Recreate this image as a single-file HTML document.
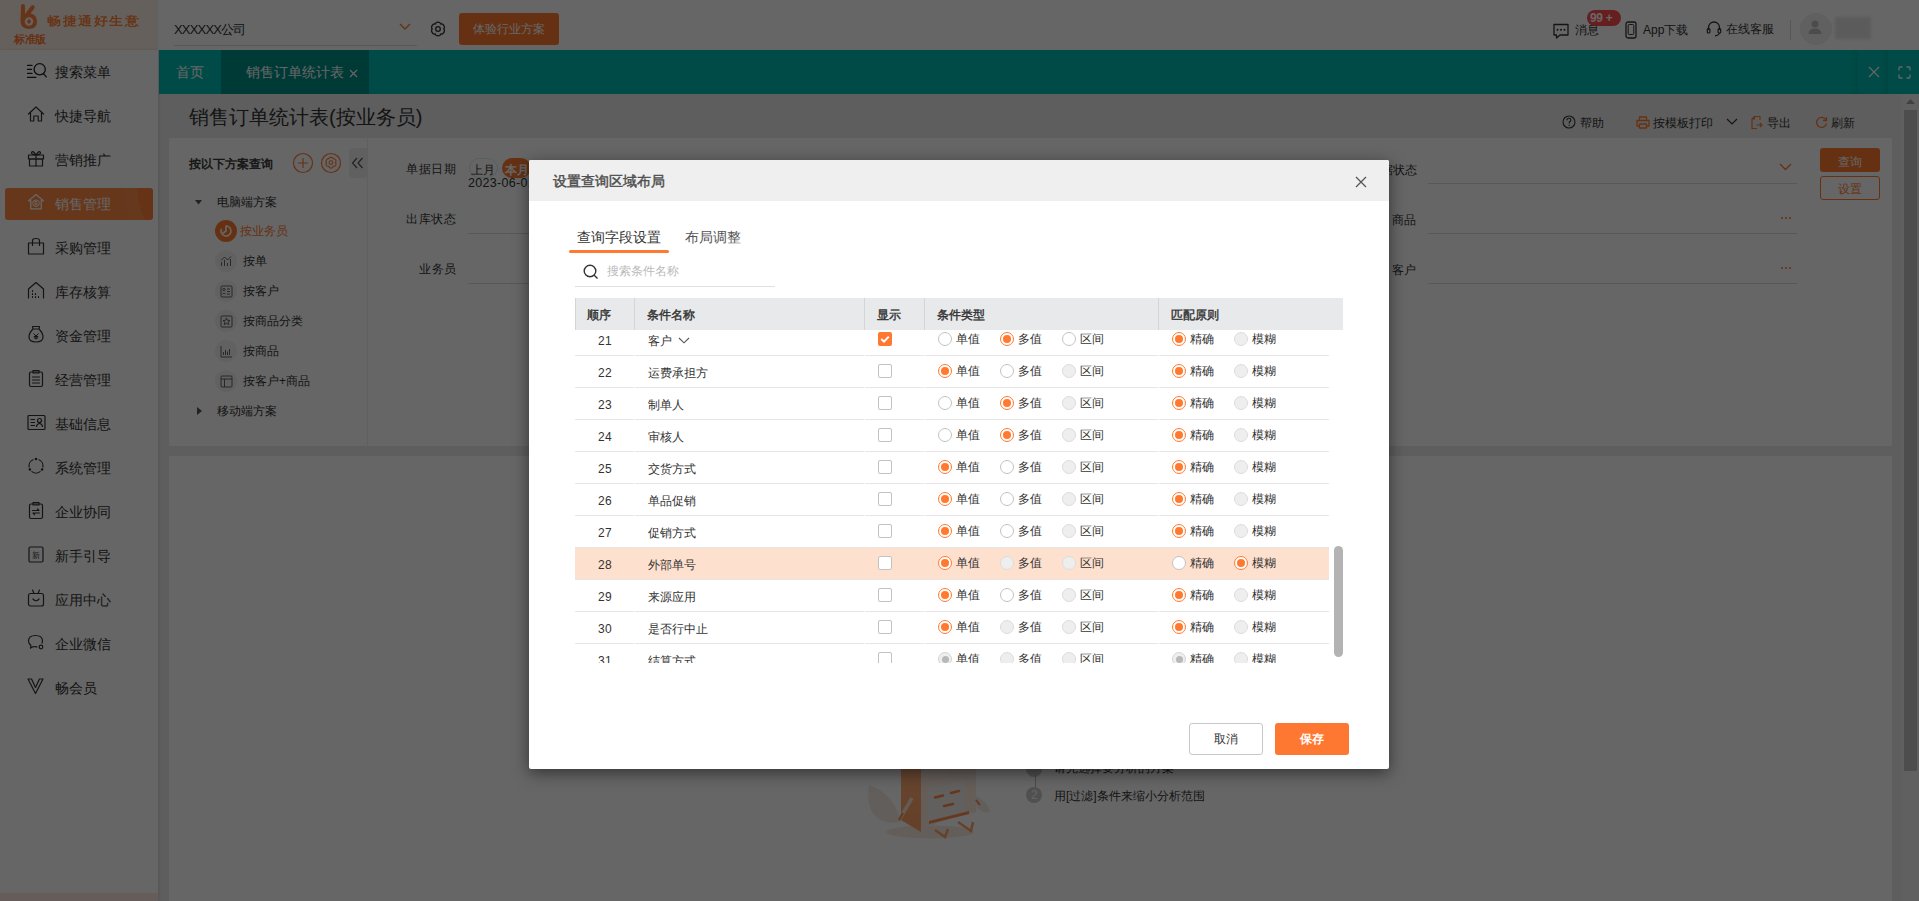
<!DOCTYPE html>
<html><head><meta charset="utf-8"><title>设置查询区域布局</title>
<style>
*{box-sizing:border-box;margin:0;padding:0}
html,body{width:1919px;height:901px;overflow:hidden;background:#ebebeb;font-family:"Liberation Sans",sans-serif;color:#333;font-size:12px}
.a{position:absolute}
.t{position:absolute;white-space:nowrap;line-height:1}
svg{position:absolute;overflow:visible}
.mask{left:0;top:0;width:1919px;height:901px;background:rgba(0,0,0,.6)}

.rd{position:absolute;width:14px;height:14px;border:1px solid #c3c3c3;border-radius:50%;background:#fff}
.rd.on{border-color:#ff7a30}
.rd.on::after{content:"";position:absolute;left:2px;top:2px;width:8px;height:8px;border-radius:50%;background:#ff7a30}
.rd.dis{background:#eeeeee;border-color:#dddddd}
.rd.dison{background:#eeeeee;border-color:#d5d5d5}
.rd.dison::after{content:"";position:absolute;left:2.5px;top:2.5px;width:7px;height:7px;border-radius:50%;background:#b8b8b8}
.cb{position:absolute;width:14px;height:14px;border:1px solid #c3c3c3;border-radius:2px;background:#fff}
.cell{position:absolute;height:1px;background:#e5e5e5}
</style></head><body>
<div class="a" style="left:0px;top:0px;width:1919px;height:50px;background:#fff;"></div><div class="a" style="left:0px;top:0px;width:158px;height:50px;background:#fff0e6;"></div><svg style="left:18px;top:3px" width="22" height="28" viewBox="0 0 22 28">
<path d="M3 3 Q3 1 5 1 Q7 1 7 3 L7 11 L13 3 Q14.5 1.5 16 2.5 Q17.5 4 16 6 L12.5 10.5 Q19 11.5 19 18.5 Q19 26 11 26 Q3 26 2.5 18.5 Z" fill="#ff8540"/>
<circle cx="11" cy="18.5" r="4.2" fill="#fff2ea"/><path d="M11 15.8 L13.2 18.5 L11 21.2 L8.8 18.5Z" fill="#ff8540"/></svg><div class="t" style="left:47px;top:15px;font-size:14px;color:#ff8540;font-weight:bold;letter-spacing:1.5px;transform:scaleY(0.86);transform-origin:0 0">畅捷通好生意</div><div class="t" style="left:14px;top:34px;font-size:11px;color:#ff7a30;font-weight:bold;letter-spacing:-0.5px">标准版</div><div class="t" style="left:174px;top:23px;font-size:13px;color:#333;font-weight:normal;letter-spacing:-0.8px">XXXXXX公司</div><div class="a" style="left:174px;top:45px;width:243px;height:1px;background:#d9d9d9;"></div><svg style="left:399px;top:23px" width="12" height="8"><path d="M1 1 L6 6 L11 1" fill="none" stroke="#ff7a30" stroke-width="1.3"/></svg><svg style="left:429px;top:20px" width="18" height="18" viewBox="0 0 18 18"><path d="M11.80 4.15 C14.03 2.79 16.89 7.75 14.60 9.00 C16.89 10.25 14.03 15.21 11.80 13.85 C11.86 16.46 6.14 16.46 6.20 13.85 C3.97 15.21 1.11 10.25 3.40 9.00 C1.11 7.75 3.97 2.79 6.20 4.15 C6.14 1.54 11.86 1.54 11.80 4.15 Z" fill="none" stroke="#333" stroke-width="1.3" stroke-linejoin="round"/><circle cx="9" cy="9" r="2.3" fill="none" stroke="#333" stroke-width="1.3"/></svg><div class="a" style="left:459px;top:13px;width:100px;height:32px;background:#ff7a30;border-radius:3px"></div><div class="t" style="left:473px;top:23px;font-size:12px;color:#fff;font-weight:normal;">体验行业方案</div><svg style="left:1552px;top:22px" width="18" height="18" viewBox="0 0 18 18"><path d="M2 2.5 H16 V13 H8 L4.5 16 V13 H2 Z" fill="none" stroke="#333" stroke-width="1.3" stroke-linejoin="round"/><circle cx="5.5" cy="7.8" r="1" fill="#333"/><circle cx="9" cy="7.8" r="1" fill="#333"/><circle cx="12.5" cy="7.8" r="1" fill="#333"/></svg><div class="t" style="left:1575px;top:24px;font-size:12px;color:#333;font-weight:normal;">消息</div><div class="a" style="left:1587px;top:10px;width:34px;height:16px;background:#ff4d4f;border-radius:8px"></div><div class="t" style="left:1590px;top:12px;font-size:12px;color:#fff;font-weight:bold;letter-spacing:-0.3px">99 +</div><svg style="left:1625px;top:21px" width="12" height="18" viewBox="0 0 12 18"><rect x="1" y="1" width="10" height="16" rx="2" fill="none" stroke="#333" stroke-width="1.3"/><rect x="3.2" y="3.5" width="5.6" height="10" rx="1" fill="none" stroke="#333" stroke-width="1"/></svg><div class="t" style="left:1643px;top:24px;font-size:12px;color:#333;font-weight:normal;">App下载</div><svg style="left:1706px;top:20px" width="16" height="18" viewBox="0 0 16 18"><path d="M2.5 10 V7.5 A5.5 5.5 0 0 1 13.5 7.5 V10" fill="none" stroke="#333" stroke-width="1.3"/><rect x="1.3" y="8.5" width="2.6" height="4.5" rx="1" fill="none" stroke="#333" stroke-width="1.2"/><rect x="12.1" y="8.5" width="2.6" height="4.5" rx="1" fill="none" stroke="#333" stroke-width="1.2"/><path d="M13.3 13 Q13 15.5 9 15.8" fill="none" stroke="#333" stroke-width="1.2"/></svg><div class="t" style="left:1726px;top:23px;font-size:12px;color:#333;font-weight:normal;">在线客服</div><div class="a" style="left:1790px;top:20px;width:1px;height:20px;background:#d9d9d9;"></div><div class="a" style="left:1800px;top:13px;width:32px;height:32px;background:#f0f0f0;border-radius:50%"></div><svg style="left:1807px;top:19px" width="16" height="16" viewBox="0 0 16 16"><circle cx="8" cy="5" r="3.5" fill="#bfbfbf"/><path d="M1.5 15 Q1.5 9.5 8 9.5 Q14.5 9.5 14.5 15Z" fill="#bfbfbf"/></svg><div class="a" style="left:1835px;top:17px;width:36px;height:22px;background:#e4e4e4;filter:blur(1.5px)"></div><div class="a" style="left:0px;top:50px;width:158px;height:851px;background:#fff;box-shadow:1px 0 3px rgba(0,0,0,.12)"></div><svg style="left:27px;top:61px" width="18" height="18" viewBox="0 0 18 18"><path d="M0.5 4.4 H5 M0.5 8.4 H4.5 M0.5 12.4 H5 M0.5 16.3 H9" fill="none" stroke="#222" stroke-width="1.3" stroke-linecap="round"/><circle cx="12.7" cy="8.3" r="5.6" fill="none" stroke="#222" stroke-width="1.3"/><path d="M16.4 12.6 L19.3 15.9" fill="none" stroke="#222" stroke-width="1.3" stroke-linecap="round"/></svg><div class="t" style="left:55px;top:64px;font-size:14px;color:#333;font-weight:normal;line-height:16px">搜索菜单</div><svg style="left:27px;top:105px" width="18" height="18" viewBox="0 0 18 18"><path d="M1.5 9 L9 2 L16.5 9 M3.5 7.5 V16 H6.8 V11 H11.2 V16 H14.5 V7.5" fill="none" stroke="#333" stroke-width="1.2" stroke-linejoin="round" stroke-linecap="round"/></svg><div class="t" style="left:55px;top:108px;font-size:14px;color:#333;font-weight:normal;line-height:16px">快捷导航</div><svg style="left:27px;top:149px" width="18" height="18" viewBox="0 0 18 18"><rect x="1.5" y="6" width="15" height="4" fill="none" stroke="#333" stroke-width="1.2" stroke-linejoin="round" stroke-linecap="round"/><rect x="2.5" y="10" width="13" height="7" fill="none" stroke="#333" stroke-width="1.2" stroke-linejoin="round" stroke-linecap="round"/><path d="M9 6 V17 M9 6 Q6 1 4.5 3.5 Q4 5.5 9 6 Q14 5.5 13.5 3.5 Q12 1 9 6" fill="none" stroke="#333" stroke-width="1.2" stroke-linejoin="round" stroke-linecap="round"/></svg><div class="t" style="left:55px;top:152px;font-size:14px;color:#333;font-weight:normal;line-height:16px">营销推广</div><div class="a" style="left:5px;top:188px;width:148px;height:32px;background:radial-gradient(ellipse 60px 80px at 175px 0px,#ff7f38 0%,#ff7f38 70%,#ff8f4f 72%,#ff8a45 100%);border-radius:3px"></div><svg style="left:27px;top:193px" width="18" height="18" viewBox="0 0 18 18"><path d="M9 1.5 L16.3 7.8 H14.2 V15.8 H3.8 V7.8 H1.7 Z" fill="none" stroke="#fff" stroke-width="1.3" stroke-linejoin="round"/><circle cx="9" cy="10.2" r="3.3" fill="none" stroke="#fff" stroke-width="1"/><text x="9" y="12.4" font-size="6" font-weight="bold" text-anchor="middle" fill="#fff" font-family="Liberation Sans">$</text></svg><div class="t" style="left:55px;top:196px;font-size:14px;color:#fff;font-weight:normal;line-height:16px">销售管理</div><svg style="left:27px;top:237px" width="18" height="18" viewBox="0 0 18 18"><rect x="1.5" y="6" width="15" height="11" fill="none" stroke="#333" stroke-width="1.2" stroke-linejoin="round" stroke-linecap="round"/><path d="M5.5 8.5 V3.5 Q5.5 1.5 9 1.5 Q12.5 1.5 12.5 3.5 V8.5" fill="none" stroke="#333" stroke-width="1.2" stroke-linejoin="round" stroke-linecap="round"/></svg><div class="t" style="left:55px;top:240px;font-size:14px;color:#333;font-weight:normal;line-height:16px">采购管理</div><svg style="left:27px;top:281px" width="18" height="18" viewBox="0 0 18 18"><path d="M1.5 17 V8 L9 1.5 L16.5 8 V17" fill="none" stroke="#333" stroke-width="1.2" stroke-linejoin="round" stroke-linecap="round"/><path d="M5.5 9.5 V10.5 M5.5 12.5 V13.5 M5.5 15.5 V16.5 M8.5 12.5 V13.5 M8.5 15.5 V16.5 M11.5 15.5 V16.5" fill="none" stroke="#333" stroke-width="1.2" stroke-linejoin="round" stroke-linecap="round"/></svg><div class="t" style="left:55px;top:284px;font-size:14px;color:#333;font-weight:normal;line-height:16px">库存核算</div><svg style="left:27px;top:325px" width="18" height="18" viewBox="0 0 18 18"><path d="M6 4 Q2 8 2 12 Q2 17 9 17 Q16 17 16 12 Q16 8 12 4Z M6 4 L5.5 1.5 H12.5 L12 4" fill="none" stroke="#333" stroke-width="1.2" stroke-linejoin="round" stroke-linecap="round"/><path d="M6.5 8.5 L9 11 L11.5 8.5 M9 11 V14.5 M6.8 11.5 H11.2 M6.8 13 H11.2" fill="none" stroke="#333" stroke-width="1"/></svg><div class="t" style="left:55px;top:328px;font-size:14px;color:#333;font-weight:normal;line-height:16px">资金管理</div><svg style="left:27px;top:369px" width="18" height="18" viewBox="0 0 18 18"><rect x="2.5" y="3" width="13" height="14.5" rx="1.5" fill="none" stroke="#333" stroke-width="1.2" stroke-linejoin="round" stroke-linecap="round"/><path d="M6 1.5 H12 V4 H6Z M5.5 8 H12.5 M5.5 11 H12.5 M5.5 14 H12.5" fill="none" stroke="#333" stroke-width="1.2" stroke-linejoin="round" stroke-linecap="round"/></svg><div class="t" style="left:55px;top:372px;font-size:14px;color:#333;font-weight:normal;line-height:16px">经营管理</div><svg style="left:27px;top:413px" width="18" height="18" viewBox="0 0 18 18"><rect x="1" y="2.5" width="17" height="14" rx="1" fill="none" stroke="#333" stroke-width="1.2" stroke-linejoin="round" stroke-linecap="round"/><path d="M4 6.5 H7.5 M4 9.5 H7.5 M4 12.5 H7.5" fill="none" stroke="#333" stroke-width="1.2" stroke-linejoin="round" stroke-linecap="round"/><circle cx="12.5" cy="7.5" r="2" fill="none" stroke="#333" stroke-width="1.2" stroke-linejoin="round" stroke-linecap="round"/><path d="M9.5 13.5 Q10 10.5 12.5 10.5 Q15 10.5 15.5 13.5" fill="none" stroke="#333" stroke-width="1.2" stroke-linejoin="round" stroke-linecap="round"/></svg><div class="t" style="left:55px;top:416px;font-size:14px;color:#333;font-weight:normal;line-height:16px">基础信息</div><svg style="left:27px;top:457px" width="18" height="18" viewBox="0 0 18 18"><path d="M11.6 2.5 A7 7 0 0 1 15.8 10.5 M13.5 14.4 A7 7 0 0 1 4.5 14.4 M2.2 10.5 A7 7 0 0 1 6.4 2.5" fill="none" stroke="#333" stroke-width="1.2"/><circle cx="9" cy="2" r="1.3" fill="#333"/><circle cx="2.9" cy="12.5" r="1.3" fill="#333"/><circle cx="15.1" cy="12.5" r="1.3" fill="#333"/></svg><div class="t" style="left:55px;top:460px;font-size:14px;color:#333;font-weight:normal;line-height:16px">系统管理</div><svg style="left:27px;top:501px" width="18" height="18" viewBox="0 0 18 18"><rect x="2.5" y="3" width="13" height="14.5" rx="1.5" fill="none" stroke="#333" stroke-width="1.2" stroke-linejoin="round" stroke-linecap="round"/><path d="M6 1.5 H12 V4 H6Z M5.5 9.5 H12 L10.5 8 M12.5 12 H6 L7.5 13.5" fill="none" stroke="#333" stroke-width="1.2" stroke-linejoin="round" stroke-linecap="round"/></svg><div class="t" style="left:55px;top:504px;font-size:14px;color:#333;font-weight:normal;line-height:16px">企业协同</div><svg style="left:27px;top:545px" width="18" height="18" viewBox="0 0 18 18"><rect x="2" y="2" width="14" height="15" rx="1.5" fill="none" stroke="#333" stroke-width="1.2" stroke-linejoin="round" stroke-linecap="round"/><text x="9" y="12.5" font-size="8" text-anchor="middle" fill="#333">新</text></svg><div class="t" style="left:55px;top:548px;font-size:14px;color:#333;font-weight:normal;line-height:16px">新手引导</div><svg style="left:27px;top:589px" width="18" height="18" viewBox="0 0 18 18"><rect x="1.5" y="4.5" width="15" height="12.5" rx="2" fill="none" stroke="#333" stroke-width="1.2" stroke-linejoin="round" stroke-linecap="round"/><path d="M5.5 1 L7 4.5 M12.5 1 L11 4.5 M6 10 Q9 13.5 12 10" fill="none" stroke="#333" stroke-width="1.2" stroke-linejoin="round" stroke-linecap="round"/></svg><div class="t" style="left:55px;top:592px;font-size:14px;color:#333;font-weight:normal;line-height:16px">应用中心</div><svg style="left:27px;top:633px" width="18" height="18" viewBox="0 0 18 18"><path d="M3.5 15 L4 12.5 Q1.5 10.5 1.5 8 Q1.5 2.5 8.5 2.5 Q15.5 2.5 15.5 8 Q15.5 9 15 10" fill="none" stroke="#333" stroke-width="1.2" stroke-linejoin="round" stroke-linecap="round"/><path d="M3.5 15 L6.5 13.5 Q8 14 10 13.8" fill="none" stroke="#333" stroke-width="1.2" stroke-linejoin="round" stroke-linecap="round"/><circle cx="14" cy="14" r="1.8" fill="none" stroke="#333" stroke-width="1.2" stroke-linejoin="round" stroke-linecap="round"/></svg><div class="t" style="left:55px;top:636px;font-size:14px;color:#333;font-weight:normal;line-height:16px">企业微信</div><svg style="left:27px;top:677px" width="18" height="18" viewBox="0 0 18 18"><path d="M1 2 L8.5 16.5 L16 2 H12.5 L8.5 10.5 L4.5 2Z" fill="none" stroke="#333" stroke-width="1.2" stroke-linejoin="round" stroke-linecap="round"/></svg><div class="t" style="left:55px;top:680px;font-size:14px;color:#333;font-weight:normal;line-height:16px">畅会员</div><div class="a" style="left:0px;top:893px;width:158px;height:8px;background:#ffe9e2;"></div><div class="a" style="left:159px;top:50px;width:1760px;height:44px;background:#00bcb1;"></div><div class="t" style="left:176px;top:65px;font-size:14px;color:#fff;font-weight:normal;">首页</div><div class="a" style="left:221px;top:50px;width:148px;height:44px;background:#00918a;"></div><div class="t" style="left:246px;top:65px;font-size:14px;color:#fff;font-weight:normal;">销售订单统计表</div><svg style="left:349px;top:69px" width="9" height="9"><path d="M1 1 L8 8 M8 1 L1 8" stroke="#fff" stroke-width="1.2"/></svg><div class="a" style="left:1850px;top:50px;width:8px;height:44px;background:linear-gradient(to right,rgba(0,0,0,0),rgba(0,0,0,.07));"></div><div class="a" style="left:1880px;top:50px;width:8px;height:44px;background:linear-gradient(to right,rgba(0,0,0,0),rgba(0,0,0,.07));"></div><svg style="left:1868px;top:66px" width="12" height="12"><path d="M1 1 L11 11 M11 1 L1 11" stroke="#fff" stroke-width="1.1"/></svg><svg style="left:1898px;top:66px" width="13" height="13"><path d="M1 4.5 V2 Q1 1 2 1 H4.5 M8.5 1 H11 Q12 1 12 2 V4.5 M12 8.5 V11 Q12 12 11 12 H8.5 M4.5 12 H2 Q1 12 1 11 V8.5" fill="none" stroke="#fff" stroke-width="1.3"/></svg><div class="t" style="left:189px;top:106px;font-size:20px;color:#333;font-weight:normal;line-height:22px">销售订单统计表(按业务员)</div><svg style="left:1562px;top:115px" width="14" height="14" viewBox="0 0 14 14"><circle cx="7" cy="7" r="6" fill="none" stroke="#333" stroke-width="1.1"/><path d="M5 5.3 Q5 3.3 7 3.3 Q9 3.3 9 5.1 Q9 6.3 7.3 7 V8.4" fill="none" stroke="#333" stroke-width="1.1"/><circle cx="7.2" cy="10.3" r="0.7" fill="#333"/></svg><div class="t" style="left:1580px;top:116px;font-size:12px;color:#333;font-weight:normal;line-height:14px">帮助</div><svg style="left:1636px;top:116px" width="14" height="13" viewBox="0 0 14 13"><path d="M3.5 4 V1 H10.5 V4 M3 10 H1 V4.5 H13 V10 H11 M3.5 8 H10.5 V12 H3.5Z" fill="none" stroke="#ff7a30" stroke-width="1.3" stroke-linejoin="round"/></svg><div class="t" style="left:1653px;top:116px;font-size:12px;color:#333;font-weight:normal;line-height:14px">按模板打印</div><svg style="left:1726px;top:118px" width="12" height="8"><path d="M1 1 L6 6 L11 1" fill="none" stroke="#333" stroke-width="1.2"/></svg><svg style="left:1751px;top:115px" width="12" height="15" viewBox="0 0 12 15"><path d="M9 5 V1.5 H3.5 L1 4 V13.5 H6 M3.5 1.5 V4 H1" fill="none" stroke="#ff7a30" stroke-width="1.2" stroke-linejoin="round"/><path d="M5.5 10 H11 M9 8 L11 10 L9 12" fill="none" stroke="#ff7a30" stroke-width="1.2"/></svg><div class="t" style="left:1767px;top:116px;font-size:12px;color:#333;font-weight:normal;line-height:14px">导出</div><svg style="left:1815px;top:116px" width="13" height="13" viewBox="0 0 13 13"><path d="M11 4 A5 5 0 1 0 11.5 7.5" fill="none" stroke="#ff7a30" stroke-width="1.3"/><path d="M11.5 1 V4.5 H8" fill="none" stroke="#ff7a30" stroke-width="1.3"/></svg><div class="t" style="left:1831px;top:116px;font-size:12px;color:#333;font-weight:normal;line-height:14px">刷新</div><div class="a" style="left:169px;top:138px;width:1723px;height:308px;background:#fff;"></div><div class="a" style="left:367px;top:138px;width:1px;height:308px;background:#eeeeee;"></div><div class="t" style="left:189px;top:157px;font-size:12px;color:#333;font-weight:normal;line-height:14px;-webkit-text-stroke:0.45px #333">按以下方案查询</div><svg style="left:292px;top:152px" width="22" height="22" viewBox="0 0 22 22"><circle cx="11" cy="11" r="9.5" fill="none" stroke="#ff7a30" stroke-width="1.2"/><path d="M11 6 V16 M6 11 H16" stroke="#ff7a30" stroke-width="1.2"/></svg><svg style="left:320px;top:152px" width="22" height="22" viewBox="0 0 22 22"><circle cx="11" cy="11" r="9.5" fill="none" stroke="#ff7a30" stroke-width="1.2"/><path d="M9.6 5.6 Q11 4.6 12.4 5.6 L13.2 6.8 L14.6 6.9 Q16.1 7.6 16.1 9.3 L15.5 10.6 L16.1 11.9 Q16.1 13.6 14.6 14.3 L13.2 14.4 L12.4 15.6 Q11 16.6 9.6 15.6 L8.8 14.4 L7.4 14.3 Q5.9 13.6 5.9 11.9 L6.5 10.6 L5.9 9.3 Q5.9 7.6 7.4 6.9 L8.8 6.8Z" fill="none" stroke="#ff7a30" stroke-width="1.1" stroke-linejoin="round"/><circle cx="11" cy="10.6" r="1.9" fill="none" stroke="#ff7a30" stroke-width="1.1"/></svg><div class="a" style="left:349px;top:148px;width:19px;height:30px;background:#f0f0f0;border-radius:4px 0 0 4px"></div><svg style="left:351px;top:157px" width="13" height="12"><path d="M6 1 L1.5 6 L6 11 M11.5 1 L7 6 L11.5 11" fill="none" stroke="#555" stroke-width="1.2"/></svg><svg style="left:194.5px;top:199.5px" width="8" height="6"><path d="M0 0 H7 L3.5 4.5Z" fill="#555"/></svg><div class="t" style="left:217px;top:196px;font-size:12px;color:#333;font-weight:normal;line-height:13px">电脑端方案</div><div class="a" style="left:215px;top:220px;width:22px;height:22px;background:#ff7a30;border-radius:50%"></div><svg style="left:219px;top:224px" width="14" height="14" viewBox="0 0 14 14"><path d="M7 2 A5 5 0 1 1 2.5 4.8" fill="none" stroke="#fff" stroke-width="1.6"/><path d="M7 1.5 V7 L3.5 9.5" fill="none" stroke="#fff" stroke-width="1.6"/></svg><div class="t" style="left:240px;top:224px;font-size:12px;color:#ff7a30;font-weight:normal;line-height:14px">按业务员</div><div class="a" style="left:215px;top:250px;width:22px;height:22px;background:#f2f2f2;border-radius:50%"></div><svg style="left:219.5px;top:254.5px" width="13" height="13" viewBox="0 0 13 13"><path d="M1.5 11 V7 M4.5 11 V5 M7.5 11 V8 M10.5 11 V4" fill="none" stroke="#555" stroke-width="0.9" stroke-linejoin="round"/><path d="M1 5.5 L4.5 2 L7.5 5 L11 1.5" fill="none" stroke="#555" stroke-width="0.9" stroke-linejoin="round"/></svg><div class="t" style="left:243px;top:254px;font-size:12px;color:#333;font-weight:normal;line-height:14px">按单</div><div class="a" style="left:215px;top:280px;width:22px;height:22px;background:#f2f2f2;border-radius:50%"></div><svg style="left:219.5px;top:284.5px" width="13" height="13" viewBox="0 0 13 13"><rect x="1" y="1" width="11" height="11" rx="1" fill="none" stroke="#555" stroke-width="0.9" stroke-linejoin="round"/><circle cx="4" cy="4.5" r="1.2" fill="none" stroke="#555" stroke-width="0.9" stroke-linejoin="round"/><path d="M2.5 9 Q4 7 5.5 9 M7 4 H10 M7 6.5 H10 M7 9 H10" fill="none" stroke="#555" stroke-width="0.9" stroke-linejoin="round"/></svg><div class="t" style="left:243px;top:284px;font-size:12px;color:#333;font-weight:normal;line-height:14px">按客户</div><div class="a" style="left:215px;top:310px;width:22px;height:22px;background:#f2f2f2;border-radius:50%"></div><svg style="left:219.5px;top:314.5px" width="13" height="13" viewBox="0 0 13 13"><rect x="1" y="1" width="11" height="11" rx="1" fill="none" stroke="#555" stroke-width="0.9" stroke-linejoin="round"/><path d="M6.5 3 L7.5 5.3 L10 5.5 L8.1 7.1 L8.7 9.6 L6.5 8.3 L4.3 9.6 L4.9 7.1 L3 5.5 L5.5 5.3Z" fill="none" stroke="#555" stroke-width="0.9" stroke-linejoin="round"/></svg><div class="t" style="left:243px;top:314px;font-size:12px;color:#333;font-weight:normal;line-height:14px">按商品分类</div><div class="a" style="left:215px;top:340px;width:22px;height:22px;background:#f2f2f2;border-radius:50%"></div><svg style="left:219.5px;top:344.5px" width="13" height="13" viewBox="0 0 13 13"><path d="M1 1 V12 H12" fill="none" stroke="#555" stroke-width="0.9" stroke-linejoin="round"/><path d="M3.5 10 V7 M5.5 10 V5 M7.5 10 V6.5 M9.5 10 V4" fill="none" stroke="#555" stroke-width="0.9" stroke-linejoin="round"/></svg><div class="t" style="left:243px;top:344px;font-size:12px;color:#333;font-weight:normal;line-height:14px">按商品</div><div class="a" style="left:215px;top:370px;width:22px;height:22px;background:#f2f2f2;border-radius:50%"></div><svg style="left:219.5px;top:374.5px" width="13" height="13" viewBox="0 0 13 13"><rect x="1" y="1" width="11" height="11" rx="1" fill="none" stroke="#555" stroke-width="0.9" stroke-linejoin="round"/><path d="M1 4 H12 M4.5 4 V12" fill="none" stroke="#555" stroke-width="0.9" stroke-linejoin="round"/></svg><div class="t" style="left:243px;top:374px;font-size:12px;color:#333;font-weight:normal;line-height:14px">按客户+商品</div><svg style="left:197px;top:407px" width="6" height="8"><path d="M0 0 V8 L5 4Z" fill="#555"/></svg><div class="t" style="left:217px;top:405px;font-size:12px;color:#333;font-weight:normal;line-height:13px">移动端方案</div><div class="t" style="left:406px;top:162px;font-size:12px;color:#333;font-weight:normal;line-height:14px;letter-spacing:0.6px">单据日期</div><div class="a" style="left:469px;top:158px;width:29px;height:20px;background:#fff;border:1px solid #d6eeee;border-radius:10px"></div><div class="t" style="left:471px;top:163px;font-size:12px;color:#333;font-weight:normal;line-height:14px">上月</div><div class="a" style="left:502px;top:158px;width:29px;height:20px;background:#ff7a30;border-radius:10px"></div><div class="t" style="left:505px;top:163px;font-size:12px;color:#fff;font-weight:bold;line-height:14px">本月</div><div class="t" style="left:468px;top:177px;font-size:12.5px;color:#333;font-weight:normal;line-height:13px;letter-spacing:0.3px">2023-06-01</div><div class="t" style="left:406px;top:212px;font-size:12px;color:#333;font-weight:normal;line-height:14px;letter-spacing:0.6px">出库状态</div><div class="a" style="left:468px;top:233px;width:400px;height:1px;background:#d9d9d9;"></div><div class="t" style="left:419px;top:262px;font-size:12px;color:#333;font-weight:normal;line-height:14px;letter-spacing:0.6px">业务员</div><div class="a" style="left:468px;top:283px;width:400px;height:1px;background:#d9d9d9;"></div><div class="t" style="left:1369px;top:163px;font-size:12px;color:#333;font-weight:normal;line-height:14px">单据状态</div><div class="a" style="left:1428px;top:183px;width:369px;height:1px;background:#d9d9d9;"></div><svg style="left:1779px;top:163px" width="13" height="8"><path d="M1 1 L6.5 6.5 L12 1" fill="none" stroke="#ff7a30" stroke-width="1.3"/></svg><div class="t" style="left:1392px;top:213px;font-size:12px;color:#333;font-weight:normal;line-height:14px">商品</div><div class="a" style="left:1428px;top:233px;width:369px;height:1px;background:#d9d9d9;"></div><div class="t" style="left:1392px;top:263px;font-size:12px;color:#333;font-weight:normal;line-height:14px">客户</div><div class="a" style="left:1428px;top:283px;width:369px;height:1px;background:#d9d9d9;"></div><div class="a" style="left:1781px;top:217px;width:2px;height:2px;background:#ff7a30;border-radius:1px"></div><div class="a" style="left:1785px;top:217px;width:2px;height:2px;background:#ff7a30;border-radius:1px"></div><div class="a" style="left:1789px;top:217px;width:2px;height:2px;background:#ff7a30;border-radius:1px"></div><div class="a" style="left:1781px;top:267px;width:2px;height:2px;background:#ff7a30;border-radius:1px"></div><div class="a" style="left:1785px;top:267px;width:2px;height:2px;background:#ff7a30;border-radius:1px"></div><div class="a" style="left:1789px;top:267px;width:2px;height:2px;background:#ff7a30;border-radius:1px"></div><div class="a" style="left:1820px;top:148px;width:60px;height:24px;background:#ff7a30;border-radius:3px"></div><div class="t" style="left:1838px;top:156px;font-size:12px;color:#fff;font-weight:normal;line-height:13px">查询</div><div class="a" style="left:1820px;top:176px;width:60px;height:24px;background:#fff;border:1px solid #ff7a30;border-radius:3px"></div><div class="t" style="left:1838px;top:183px;font-size:12px;color:#ff7a30;font-weight:normal;line-height:13px">设置</div><div class="a" style="left:169px;top:456px;width:1723px;height:445px;background:#fff;"></div><svg style="left:860px;top:760px" width="140" height="90" viewBox="860 760 140 90">
<defs><linearGradient id="g1" x1="0" y1="0" x2="0" y2="1"><stop offset="0" stop-color="#ffb07a"/><stop offset="1" stop-color="#ffa064"/></linearGradient>
<linearGradient id="g2" x1="0" y1="0" x2="1" y2="0"><stop offset="0" stop-color="#fbeee6"/><stop offset="1" stop-color="#fde6d8"/></linearGradient></defs>
<ellipse cx="930" cy="832" rx="44" ry="6.5" fill="#fbebe2"/>
<path d="M869 785 Q893 792 901 822 Q878 826 870 808 Q867 796 869 785Z" fill="#f6ebe4"/>
<path d="M976 796 Q988 802 990 812 Q982 814 976 806Z" fill="#f6ebe4"/>
<path d="M901 760 H976 V800 L921 832 L901 820Z" fill="url(#g2)"/>
<path d="M901 760 H921 V832 L901 820Z" fill="url(#g1)"/>
<path d="M921 783 Q921 780 924 779 L972 772 Q976 772 976 775 V812 L921 825Z" fill="#fae9dd"/>
<path d="M928 788 L965 780 V812 L928 821Z" fill="#f4efeb"/>
<path d="M929 821 L969 811 L969 814 L929 824Z" fill="#ff8f4f"/>
<path d="M935 797.5 L943 795.5 M951 793 L959 791 M944 806 L953 804" stroke="#ff8a45" stroke-width="2.6" stroke-linecap="round"/>
<path d="M899 820 L912 798" stroke="#fde3d2" stroke-width="3.5"/><path d="M899 820 L903 813" stroke="#ff8a45" stroke-width="2"/>
<path d="M935 830 L945 837 L948 829" fill="none" stroke="#ffa46a" stroke-width="2.5"/>
<path d="M958 822 L971 831 L973 822" fill="none" stroke="#ffa46a" stroke-width="2.5"/>
<path d="M976 800 L980 805" stroke="#ff8a45" stroke-width="2"/>
</svg><div class="a" style="left:1026px;top:761px;width:16px;height:16px;background:#c8c8c8;border-radius:50%"></div><div class="a" style="left:1035px;top:775px;width:1px;height:12px;background:#bbb;"></div><div class="a" style="left:1026px;top:787px;width:16px;height:16px;background:#c8c8c8;border-radius:50%"></div><div class="t" style="left:1031px;top:789px;font-size:12px;color:#fff;font-weight:normal;line-height:12px">2</div><div class="t" style="left:1054px;top:761px;font-size:12px;color:#333;font-weight:normal;line-height:14px">请先选择要分析的方案</div><div class="t" style="left:1054px;top:789px;font-size:12px;color:#333;font-weight:normal;line-height:14px">用[过滤]条件来缩小分析范围</div><div class="a" style="left:1902px;top:94px;width:17px;height:807px;background:#f1f1f1;"></div><svg style="left:1906px;top:99px" width="9" height="5"><path d="M0 5 L4.5 0 L9 5Z" fill="#a3a3a3"/></svg><div class="a" style="left:1904px;top:110px;width:13px;height:661px;background:#c1c1c1;"></div>
<div class="a mask"></div>
<div class="a" style="left:529px;top:160px;width:860px;height:609px;background:#fff;box-shadow:0 4px 16px rgba(0,0,0,.5);border-radius:2px"></div><div class="a" style="left:529px;top:160px;width:860px;height:41px;background:#efefef;border-radius:2px 2px 0 0"></div><div class="t" style="left:553px;top:173px;font-size:14px;color:#505050;font-weight:normal;line-height:16px;-webkit-text-stroke:0.45px #505050">设置查询区域布局</div><svg style="left:1355px;top:176px" width="12" height="12"><path d="M1 1 L11 11 M11 1 L1 11" stroke="#555" stroke-width="1.3"/></svg><div class="t" style="left:577px;top:229px;font-size:14px;color:#333;font-weight:normal;line-height:16px">查询字段设置</div><div class="t" style="left:685px;top:229px;font-size:14px;color:#555;font-weight:normal;line-height:16px">布局调整</div><div class="a" style="left:569px;top:250px;width:100px;height:3px;background:#ff7a30;border-radius:2px"></div><svg style="left:583px;top:264px" width="16" height="16" viewBox="0 0 16 16"><circle cx="7" cy="7" r="5.8" fill="none" stroke="#333" stroke-width="1.4"/><path d="M11.2 11.2 L14.5 14.5" stroke="#333" stroke-width="1.4"/></svg><div class="t" style="left:607px;top:264px;font-size:12px;color:#bbbbbb;font-weight:normal;line-height:14px">搜索条件名称</div><div class="a" style="left:575px;top:286px;width:200px;height:1px;background:#e0e0e0;"></div><div class="a" style="left:575px;top:330px;width:768px;height:333px;overflow:hidden"><div class="a" style="left:0px;top:217px;width:754px;height:33px;background:#fee0cf;"></div><div class="cell" style="left:0px;top:25px;width:59px"></div><div class="cell" style="left:60px;top:25px;width:229px"></div><div class="cell" style="left:290px;top:25px;width:59px"></div><div class="cell" style="left:350px;top:25px;width:233px"></div><div class="cell" style="left:584px;top:25px;width:170px"></div><div class="t" style="left:23px;top:4px;font-size:12px;color:#333;font-weight:normal;line-height:14px;letter-spacing:0.3px">21</div><div class="t" style="left:73px;top:4px;font-size:12px;color:#333;font-weight:normal;line-height:14px">客户</div><svg style="left:103px;top:7px" width="12" height="7"><path d="M1 1 L6 5.8 L11 1" fill="none" stroke="#555" stroke-width="1.1"/></svg><div class="a" style="left:303px;top:2px;width:14px;height:14px;background:#ff7a30;border-radius:2px"></div><svg style="left:305px;top:4px" width="10" height="10"><path d="M1.3 5 L4 7.6 L8.8 2.6" fill="none" stroke="#fff" stroke-width="2"/></svg><div class="rd" style="left:363px;top:2px"></div><div class="t" style="left:381px;top:2px;font-size:12px;color:#333;font-weight:normal;line-height:14px">单值</div><div class="rd on" style="left:425px;top:2px"></div><div class="t" style="left:443px;top:2px;font-size:12px;color:#333;font-weight:normal;line-height:14px">多值</div><div class="rd" style="left:487px;top:2px"></div><div class="t" style="left:505px;top:2px;font-size:12px;color:#333;font-weight:normal;line-height:14px">区间</div><div class="rd on" style="left:597px;top:2px"></div><div class="t" style="left:615px;top:2px;font-size:12px;color:#333;font-weight:normal;line-height:14px">精确</div><div class="rd dis" style="left:659px;top:2px"></div><div class="t" style="left:677px;top:2px;font-size:12px;color:#333;font-weight:normal;line-height:14px">模糊</div><div class="cell" style="left:0px;top:57px;width:59px"></div><div class="cell" style="left:60px;top:57px;width:229px"></div><div class="cell" style="left:290px;top:57px;width:59px"></div><div class="cell" style="left:350px;top:57px;width:233px"></div><div class="cell" style="left:584px;top:57px;width:170px"></div><div class="t" style="left:23px;top:36px;font-size:12px;color:#333;font-weight:normal;line-height:14px;letter-spacing:0.3px">22</div><div class="t" style="left:73px;top:36px;font-size:12px;color:#333;font-weight:normal;line-height:14px">运费承担方</div><div class="cb" style="left:303px;top:34px"></div><div class="rd on" style="left:363px;top:34px"></div><div class="t" style="left:381px;top:34px;font-size:12px;color:#333;font-weight:normal;line-height:14px">单值</div><div class="rd" style="left:425px;top:34px"></div><div class="t" style="left:443px;top:34px;font-size:12px;color:#333;font-weight:normal;line-height:14px">多值</div><div class="rd dis" style="left:487px;top:34px"></div><div class="t" style="left:505px;top:34px;font-size:12px;color:#333;font-weight:normal;line-height:14px">区间</div><div class="rd on" style="left:597px;top:34px"></div><div class="t" style="left:615px;top:34px;font-size:12px;color:#333;font-weight:normal;line-height:14px">精确</div><div class="rd dis" style="left:659px;top:34px"></div><div class="t" style="left:677px;top:34px;font-size:12px;color:#333;font-weight:normal;line-height:14px">模糊</div><div class="cell" style="left:0px;top:89px;width:59px"></div><div class="cell" style="left:60px;top:89px;width:229px"></div><div class="cell" style="left:290px;top:89px;width:59px"></div><div class="cell" style="left:350px;top:89px;width:233px"></div><div class="cell" style="left:584px;top:89px;width:170px"></div><div class="t" style="left:23px;top:68px;font-size:12px;color:#333;font-weight:normal;line-height:14px;letter-spacing:0.3px">23</div><div class="t" style="left:73px;top:68px;font-size:12px;color:#333;font-weight:normal;line-height:14px">制单人</div><div class="cb" style="left:303px;top:66px"></div><div class="rd" style="left:363px;top:66px"></div><div class="t" style="left:381px;top:66px;font-size:12px;color:#333;font-weight:normal;line-height:14px">单值</div><div class="rd on" style="left:425px;top:66px"></div><div class="t" style="left:443px;top:66px;font-size:12px;color:#333;font-weight:normal;line-height:14px">多值</div><div class="rd dis" style="left:487px;top:66px"></div><div class="t" style="left:505px;top:66px;font-size:12px;color:#333;font-weight:normal;line-height:14px">区间</div><div class="rd on" style="left:597px;top:66px"></div><div class="t" style="left:615px;top:66px;font-size:12px;color:#333;font-weight:normal;line-height:14px">精确</div><div class="rd dis" style="left:659px;top:66px"></div><div class="t" style="left:677px;top:66px;font-size:12px;color:#333;font-weight:normal;line-height:14px">模糊</div><div class="cell" style="left:0px;top:121px;width:59px"></div><div class="cell" style="left:60px;top:121px;width:229px"></div><div class="cell" style="left:290px;top:121px;width:59px"></div><div class="cell" style="left:350px;top:121px;width:233px"></div><div class="cell" style="left:584px;top:121px;width:170px"></div><div class="t" style="left:23px;top:100px;font-size:12px;color:#333;font-weight:normal;line-height:14px;letter-spacing:0.3px">24</div><div class="t" style="left:73px;top:100px;font-size:12px;color:#333;font-weight:normal;line-height:14px">审核人</div><div class="cb" style="left:303px;top:98px"></div><div class="rd" style="left:363px;top:98px"></div><div class="t" style="left:381px;top:98px;font-size:12px;color:#333;font-weight:normal;line-height:14px">单值</div><div class="rd on" style="left:425px;top:98px"></div><div class="t" style="left:443px;top:98px;font-size:12px;color:#333;font-weight:normal;line-height:14px">多值</div><div class="rd dis" style="left:487px;top:98px"></div><div class="t" style="left:505px;top:98px;font-size:12px;color:#333;font-weight:normal;line-height:14px">区间</div><div class="rd on" style="left:597px;top:98px"></div><div class="t" style="left:615px;top:98px;font-size:12px;color:#333;font-weight:normal;line-height:14px">精确</div><div class="rd dis" style="left:659px;top:98px"></div><div class="t" style="left:677px;top:98px;font-size:12px;color:#333;font-weight:normal;line-height:14px">模糊</div><div class="cell" style="left:0px;top:153px;width:59px"></div><div class="cell" style="left:60px;top:153px;width:229px"></div><div class="cell" style="left:290px;top:153px;width:59px"></div><div class="cell" style="left:350px;top:153px;width:233px"></div><div class="cell" style="left:584px;top:153px;width:170px"></div><div class="t" style="left:23px;top:132px;font-size:12px;color:#333;font-weight:normal;line-height:14px;letter-spacing:0.3px">25</div><div class="t" style="left:73px;top:132px;font-size:12px;color:#333;font-weight:normal;line-height:14px">交货方式</div><div class="cb" style="left:303px;top:130px"></div><div class="rd on" style="left:363px;top:130px"></div><div class="t" style="left:381px;top:130px;font-size:12px;color:#333;font-weight:normal;line-height:14px">单值</div><div class="rd" style="left:425px;top:130px"></div><div class="t" style="left:443px;top:130px;font-size:12px;color:#333;font-weight:normal;line-height:14px">多值</div><div class="rd dis" style="left:487px;top:130px"></div><div class="t" style="left:505px;top:130px;font-size:12px;color:#333;font-weight:normal;line-height:14px">区间</div><div class="rd on" style="left:597px;top:130px"></div><div class="t" style="left:615px;top:130px;font-size:12px;color:#333;font-weight:normal;line-height:14px">精确</div><div class="rd dis" style="left:659px;top:130px"></div><div class="t" style="left:677px;top:130px;font-size:12px;color:#333;font-weight:normal;line-height:14px">模糊</div><div class="cell" style="left:0px;top:185px;width:59px"></div><div class="cell" style="left:60px;top:185px;width:229px"></div><div class="cell" style="left:290px;top:185px;width:59px"></div><div class="cell" style="left:350px;top:185px;width:233px"></div><div class="cell" style="left:584px;top:185px;width:170px"></div><div class="t" style="left:23px;top:164px;font-size:12px;color:#333;font-weight:normal;line-height:14px;letter-spacing:0.3px">26</div><div class="t" style="left:73px;top:164px;font-size:12px;color:#333;font-weight:normal;line-height:14px">单品促销</div><div class="cb" style="left:303px;top:162px"></div><div class="rd on" style="left:363px;top:162px"></div><div class="t" style="left:381px;top:162px;font-size:12px;color:#333;font-weight:normal;line-height:14px">单值</div><div class="rd" style="left:425px;top:162px"></div><div class="t" style="left:443px;top:162px;font-size:12px;color:#333;font-weight:normal;line-height:14px">多值</div><div class="rd dis" style="left:487px;top:162px"></div><div class="t" style="left:505px;top:162px;font-size:12px;color:#333;font-weight:normal;line-height:14px">区间</div><div class="rd on" style="left:597px;top:162px"></div><div class="t" style="left:615px;top:162px;font-size:12px;color:#333;font-weight:normal;line-height:14px">精确</div><div class="rd dis" style="left:659px;top:162px"></div><div class="t" style="left:677px;top:162px;font-size:12px;color:#333;font-weight:normal;line-height:14px">模糊</div><div class="cell" style="left:0px;top:217px;width:59px"></div><div class="cell" style="left:60px;top:217px;width:229px"></div><div class="cell" style="left:290px;top:217px;width:59px"></div><div class="cell" style="left:350px;top:217px;width:233px"></div><div class="cell" style="left:584px;top:217px;width:170px"></div><div class="t" style="left:23px;top:196px;font-size:12px;color:#333;font-weight:normal;line-height:14px;letter-spacing:0.3px">27</div><div class="t" style="left:73px;top:196px;font-size:12px;color:#333;font-weight:normal;line-height:14px">促销方式</div><div class="cb" style="left:303px;top:194px"></div><div class="rd on" style="left:363px;top:194px"></div><div class="t" style="left:381px;top:194px;font-size:12px;color:#333;font-weight:normal;line-height:14px">单值</div><div class="rd" style="left:425px;top:194px"></div><div class="t" style="left:443px;top:194px;font-size:12px;color:#333;font-weight:normal;line-height:14px">多值</div><div class="rd dis" style="left:487px;top:194px"></div><div class="t" style="left:505px;top:194px;font-size:12px;color:#333;font-weight:normal;line-height:14px">区间</div><div class="rd on" style="left:597px;top:194px"></div><div class="t" style="left:615px;top:194px;font-size:12px;color:#333;font-weight:normal;line-height:14px">精确</div><div class="rd dis" style="left:659px;top:194px"></div><div class="t" style="left:677px;top:194px;font-size:12px;color:#333;font-weight:normal;line-height:14px">模糊</div><div class="cell" style="left:0px;top:249px;width:59px"></div><div class="cell" style="left:60px;top:249px;width:229px"></div><div class="cell" style="left:290px;top:249px;width:59px"></div><div class="cell" style="left:350px;top:249px;width:233px"></div><div class="cell" style="left:584px;top:249px;width:170px"></div><div class="t" style="left:23px;top:228px;font-size:12px;color:#333;font-weight:normal;line-height:14px;letter-spacing:0.3px">28</div><div class="t" style="left:73px;top:228px;font-size:12px;color:#333;font-weight:normal;line-height:14px">外部单号</div><div class="cb" style="left:303px;top:226px"></div><div class="rd on" style="left:363px;top:226px"></div><div class="t" style="left:381px;top:226px;font-size:12px;color:#333;font-weight:normal;line-height:14px">单值</div><div class="rd dis" style="left:425px;top:226px"></div><div class="t" style="left:443px;top:226px;font-size:12px;color:#333;font-weight:normal;line-height:14px">多值</div><div class="rd dis" style="left:487px;top:226px"></div><div class="t" style="left:505px;top:226px;font-size:12px;color:#333;font-weight:normal;line-height:14px">区间</div><div class="rd" style="left:597px;top:226px"></div><div class="t" style="left:615px;top:226px;font-size:12px;color:#333;font-weight:normal;line-height:14px">精确</div><div class="rd on" style="left:659px;top:226px"></div><div class="t" style="left:677px;top:226px;font-size:12px;color:#333;font-weight:normal;line-height:14px">模糊</div><div class="cell" style="left:0px;top:281px;width:59px"></div><div class="cell" style="left:60px;top:281px;width:229px"></div><div class="cell" style="left:290px;top:281px;width:59px"></div><div class="cell" style="left:350px;top:281px;width:233px"></div><div class="cell" style="left:584px;top:281px;width:170px"></div><div class="t" style="left:23px;top:260px;font-size:12px;color:#333;font-weight:normal;line-height:14px;letter-spacing:0.3px">29</div><div class="t" style="left:73px;top:260px;font-size:12px;color:#333;font-weight:normal;line-height:14px">来源应用</div><div class="cb" style="left:303px;top:258px"></div><div class="rd on" style="left:363px;top:258px"></div><div class="t" style="left:381px;top:258px;font-size:12px;color:#333;font-weight:normal;line-height:14px">单值</div><div class="rd" style="left:425px;top:258px"></div><div class="t" style="left:443px;top:258px;font-size:12px;color:#333;font-weight:normal;line-height:14px">多值</div><div class="rd dis" style="left:487px;top:258px"></div><div class="t" style="left:505px;top:258px;font-size:12px;color:#333;font-weight:normal;line-height:14px">区间</div><div class="rd on" style="left:597px;top:258px"></div><div class="t" style="left:615px;top:258px;font-size:12px;color:#333;font-weight:normal;line-height:14px">精确</div><div class="rd dis" style="left:659px;top:258px"></div><div class="t" style="left:677px;top:258px;font-size:12px;color:#333;font-weight:normal;line-height:14px">模糊</div><div class="cell" style="left:0px;top:313px;width:59px"></div><div class="cell" style="left:60px;top:313px;width:229px"></div><div class="cell" style="left:290px;top:313px;width:59px"></div><div class="cell" style="left:350px;top:313px;width:233px"></div><div class="cell" style="left:584px;top:313px;width:170px"></div><div class="t" style="left:23px;top:292px;font-size:12px;color:#333;font-weight:normal;line-height:14px;letter-spacing:0.3px">30</div><div class="t" style="left:73px;top:292px;font-size:12px;color:#333;font-weight:normal;line-height:14px">是否行中止</div><div class="cb" style="left:303px;top:290px"></div><div class="rd on" style="left:363px;top:290px"></div><div class="t" style="left:381px;top:290px;font-size:12px;color:#333;font-weight:normal;line-height:14px">单值</div><div class="rd dis" style="left:425px;top:290px"></div><div class="t" style="left:443px;top:290px;font-size:12px;color:#333;font-weight:normal;line-height:14px">多值</div><div class="rd dis" style="left:487px;top:290px"></div><div class="t" style="left:505px;top:290px;font-size:12px;color:#333;font-weight:normal;line-height:14px">区间</div><div class="rd on" style="left:597px;top:290px"></div><div class="t" style="left:615px;top:290px;font-size:12px;color:#333;font-weight:normal;line-height:14px">精确</div><div class="rd dis" style="left:659px;top:290px"></div><div class="t" style="left:677px;top:290px;font-size:12px;color:#333;font-weight:normal;line-height:14px">模糊</div><div class="cell" style="left:0px;top:345px;width:59px"></div><div class="cell" style="left:60px;top:345px;width:229px"></div><div class="cell" style="left:290px;top:345px;width:59px"></div><div class="cell" style="left:350px;top:345px;width:233px"></div><div class="cell" style="left:584px;top:345px;width:170px"></div><div class="t" style="left:23px;top:324px;font-size:12px;color:#333;font-weight:normal;line-height:14px;letter-spacing:0.3px">31</div><div class="t" style="left:73px;top:324px;font-size:12px;color:#333;font-weight:normal;line-height:14px">结算方式</div><div class="cb" style="left:303px;top:322px"></div><div class="rd dison" style="left:363px;top:322px"></div><div class="t" style="left:381px;top:322px;font-size:12px;color:#333;font-weight:normal;line-height:14px">单值</div><div class="rd dis" style="left:425px;top:322px"></div><div class="t" style="left:443px;top:322px;font-size:12px;color:#333;font-weight:normal;line-height:14px">多值</div><div class="rd dis" style="left:487px;top:322px"></div><div class="t" style="left:505px;top:322px;font-size:12px;color:#333;font-weight:normal;line-height:14px">区间</div><div class="rd dison" style="left:597px;top:322px"></div><div class="t" style="left:615px;top:322px;font-size:12px;color:#333;font-weight:normal;line-height:14px">精确</div><div class="rd dis" style="left:659px;top:322px"></div><div class="t" style="left:677px;top:322px;font-size:12px;color:#333;font-weight:normal;line-height:14px">模糊</div></div><div class="a" style="left:575px;top:298px;width:768px;height:32px;background:#e8e9eb;"></div><div class="a" style="left:575px;top:298px;width:1px;height:32px;background:#d5d5d5;"></div><div class="a" style="left:634px;top:298px;width:1px;height:32px;background:#d5d5d5;"></div><div class="a" style="left:864px;top:298px;width:1px;height:32px;background:#d5d5d5;"></div><div class="a" style="left:924px;top:298px;width:1px;height:32px;background:#d5d5d5;"></div><div class="a" style="left:1158px;top:298px;width:1px;height:32px;background:#d5d5d5;"></div><div class="t" style="left:587px;top:308px;font-size:12px;color:#333;font-weight:normal;line-height:14px;-webkit-text-stroke:0.4px #333">顺序</div><div class="t" style="left:647px;top:308px;font-size:12px;color:#333;font-weight:normal;line-height:14px;-webkit-text-stroke:0.4px #333">条件名称</div><div class="t" style="left:877px;top:308px;font-size:12px;color:#333;font-weight:normal;line-height:14px;-webkit-text-stroke:0.4px #333">显示</div><div class="t" style="left:937px;top:308px;font-size:12px;color:#333;font-weight:normal;line-height:14px;-webkit-text-stroke:0.4px #333">条件类型</div><div class="t" style="left:1171px;top:308px;font-size:12px;color:#333;font-weight:normal;line-height:14px;-webkit-text-stroke:0.4px #333">匹配原则</div><div class="a" style="left:1334px;top:546px;width:9px;height:111px;background:#b3b3b3;border-radius:4.5px"></div><div class="a" style="left:1189px;top:723px;width:74px;height:32px;background:#fff;border:1px solid #c8c8c8;border-radius:3px"></div><div class="t" style="left:1214px;top:732px;font-size:12px;color:#333;font-weight:normal;line-height:14px">取消</div><div class="a" style="left:1275px;top:723px;width:74px;height:32px;background:#ff7832;border-radius:3px"></div><div class="t" style="left:1300px;top:732px;font-size:12px;color:#fff;font-weight:bold;line-height:14px">保存</div>
</body></html>
